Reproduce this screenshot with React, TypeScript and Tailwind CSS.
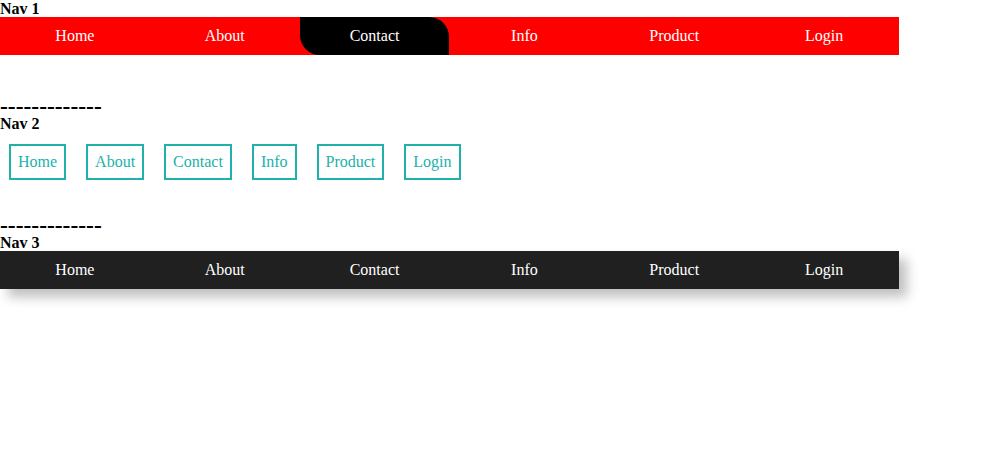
import React from 'react';

const items = ['Home', 'About', 'Contact', 'Info', 'Product', 'Login'];

export default function App() {
  return (
    <div className="font-['Liberation_Serif',serif] text-base text-black bg-white min-h-[460px]">
      {/* Nav 1 */}
      <div className="font-bold leading-[17px]">Nav 1</div>
      <nav className="flex w-[899px] h-[38px] bg-[#ff0000]">
        {items.map((item) => (
          <a
            key={item}
            className={`flex-1 flex items-center justify-center text-white ${
              item === 'Contact' ? 'bg-black rounded-tr-[20px] rounded-bl-[20px]' : ''
            }`}
          >
            {item}
          </a>
        ))}
      </nav>

      <div className="mt-[42px] font-bold text-[23.5px] leading-[18px]">-------------</div>

      {/* Nav 2 */}
      <div className="font-bold leading-[18px]">Nav 2</div>
      <nav className="flex gap-5 pl-[9px] mt-[11px]">
        {items.map((item) => (
          <a
            key={item}
            className="border-2 border-[#20b2aa] text-[#20b2aa] px-[7px] py-[7px] leading-[18px]"
          >
            {item}
          </a>
        ))}
      </nav>

      <div className="mt-[36px] font-bold text-[23.5px] leading-[18px]">-------------</div>

      {/* Nav 3 */}
      <div className="font-bold leading-[17px]">Nav 3</div>
      <nav className="flex w-[899px] h-[38px] bg-[#202020] shadow-[8px_8px_12px_rgba(0,0,0,0.25)]">
        {items.map((item) => (
          <a key={item} className="flex-1 flex items-center justify-center text-white">
            {item}
          </a>
        ))}
      </nav>
    </div>
  );
}
